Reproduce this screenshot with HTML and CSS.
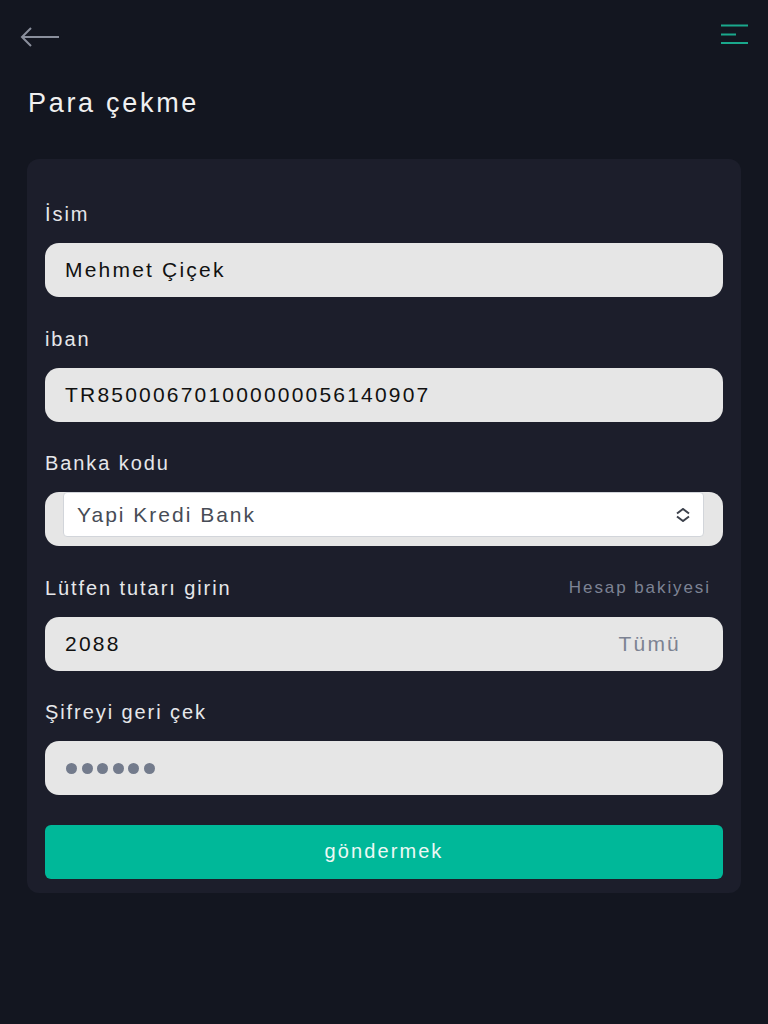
FILE: index.html
```html
<!DOCTYPE html>
<html>
<head>
    <title>Para çekme</title>
    <link rel="stylesheet" href="styles.css">
</head>
<body>
    <div class="topbar">
        <svg class="back" width="40" height="20" viewBox="0 0 40 20">
            <path d="M39 10H2M11 1L2 10l9 9" fill="none" stroke="#8a8f9c" stroke-width="2"/>
        </svg>
        <svg class="menu" width="28" height="20" viewBox="0 0 28 20">
            <path d="M1 1.5h27M1 10.5h15M1 19h27" fill="none" stroke="#1aa88c" stroke-width="2"/>
        </svg>
    </div>

    <h1 class="title">Para çekme</h1>

    <form class="card">
        <div class="field">
            <label>İsim</label>
            <div class="input">Mehmet Çiçek</div>
        </div>

        <div class="field">
            <label>iban</label>
            <div class="input">TR850006701000000056140907</div>
        </div>

        <div class="field">
            <label>Banka kodu</label>
            <div class="select-wrap">
                <div class="select">
                    <span>Yapi Kredi Bank</span>
                    <svg width="16" height="14" viewBox="0 0 16 14">
                        <path d="M2 5.5L8 1l6 4.5M2 8.5L8 13l6-4.5" fill="none" stroke="#3c414b" stroke-width="2"/>
                    </svg>
                </div>
            </div>
        </div>

        <div class="field">
            <div class="label-row">
                <label>Lütfen tutarı girin</label>
                <span class="balance">Hesap bakiyesi</span>
            </div>
            <div class="input amount">
                <span>2088</span>
                <span class="all">Tümü</span>
            </div>
        </div>

        <div class="field">
            <label>Şifreyi geri çek</label>
            <div class="input dots">
                <i></i><i></i><i></i><i></i><i></i><i></i>
            </div>
        </div>

        <button type="button" class="submit">göndermek</button>
    </form>
</body>
</html>
```

FILE: styles.css
```css
body {
    font-family: "Liberation Sans", Arial, sans-serif;
    background: #131620;
    color: #e9eaec;
    margin: 0;
    padding: 0 27px;
    letter-spacing: 0.12em;
}

.topbar {
    height: 74px;
    display: flex;
    justify-content: space-between;
    align-items: center;
    margin: 0 -7px 0 -7px;
}

.menu {
    margin-top: -6px;
}

.title {
    font-size: 27px;
    font-weight: normal;
    line-height: 32px;
    margin: 13px 0 40px 1px;
    color: #f0f0f0;
    letter-spacing: 2.7px;
}

.card {
    background: #1c1e2b;
    border-radius: 12px;
    padding: 43px 18px 14px;
}

.field {
    margin-bottom: 29.5px;
}

label {
    display: block;
    font-size: 20px;
    line-height: 24px;
    color: #e6e7ea;
}

.label-row {
    display: flex;
    justify-content: space-between;
    align-items: center;
    padding-right: 12px;
}

.balance {
    font-size: 17px;
    color: #7d8394;
}

.input {
    margin-top: 17px;
    height: 54px;
    box-sizing: border-box;
    background: #e6e6e6;
    border-radius: 14px;
    padding: 0 20px;
    display: flex;
    align-items: center;
    font-size: 21px;
    letter-spacing: 2.2px;
    color: #111;
}

.amount {
    justify-content: space-between;
    padding-right: 42px;
}

.all {
    color: #7c8292;
}

.dots {
    gap: 4.5px;
    padding-left: 21px;
}

.dots i {
    width: 11px;
    height: 11px;
    border-radius: 50%;
    background: #737b8c;
}

.select-wrap {
    margin-top: 17px;
    height: 54px;
    box-sizing: border-box;
    background: #e6e6e6;
    border-radius: 14px;
    padding: 0 19px 9px 18px;
}

.select {
    height: 45px;
    box-sizing: border-box;
    background: #fff;
    border: 1px solid #d2d5da;
    border-radius: 4px;
    display: flex;
    justify-content: space-between;
    align-items: center;
    padding: 0 12px 0 13px;
    font-size: 21px;
    letter-spacing: 2px;
    color: #474c56;
}

.submit {
    display: block;
    width: 100%;
    height: 54px;
    border: none;
    border-radius: 6px;
    background: #00b899;
    color: #eef8f5;
    font-family: inherit;
    font-size: 20px;
    letter-spacing: 2.1px;
    cursor: pointer;
}
```
